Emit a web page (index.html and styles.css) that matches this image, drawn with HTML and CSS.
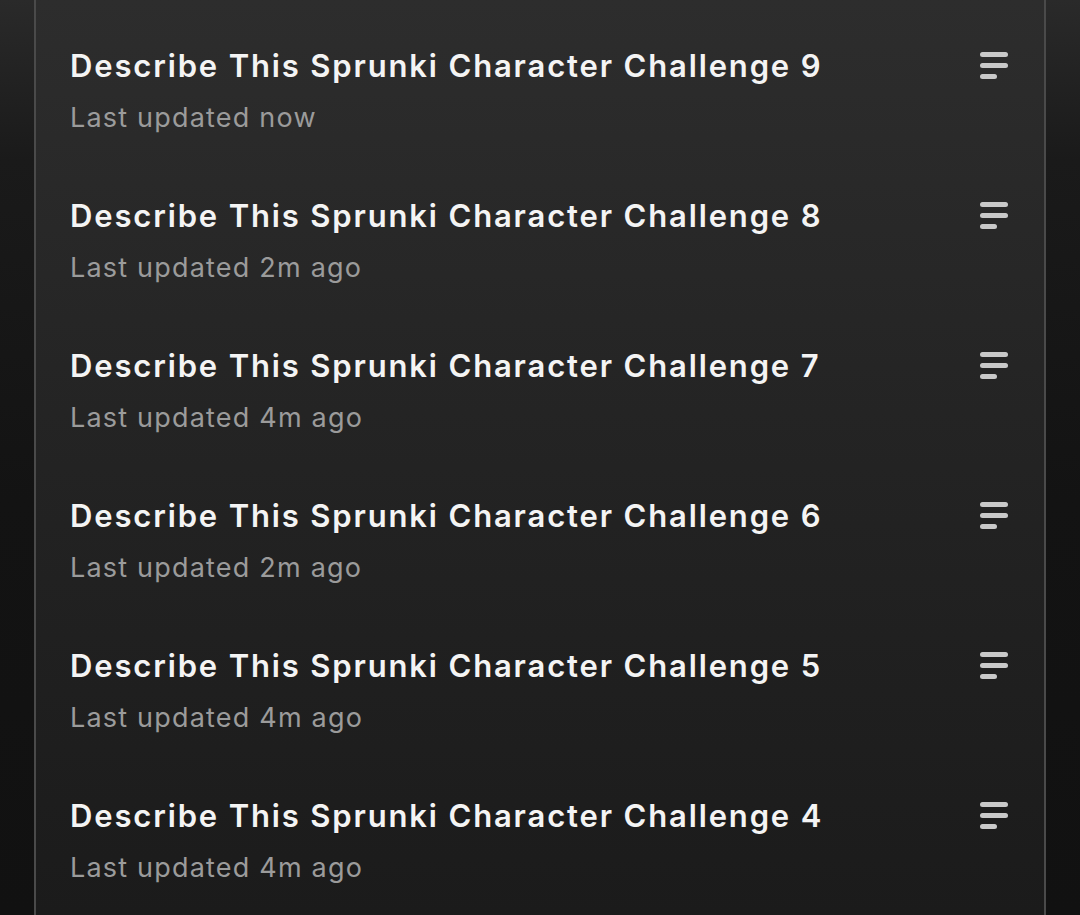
FILE: index.html
```html
<!DOCTYPE html>
<html lang="en">
<head>
<meta charset="utf-8">
<title>Challenges</title>
<link rel="stylesheet" href="styles.css">
</head>
<body>
<main class="page">
  <ul class="card">
    <li class="row">
      <div class="text">
        <div class="title">Describe This Sprunki Character Challenge 9</div>
        <div class="meta">Last updated now</div>
      </div>
      <svg class="icon" width="28" height="28" viewBox="0 0 28 28"><g stroke="#c9c9c9" stroke-width="5" stroke-linecap="round"><line x1="2.5" y1="2.5" x2="25.5" y2="2.5"/><line x1="2.5" y1="13.5" x2="25.5" y2="13.5"/><line x1="2.5" y1="24.5" x2="14.5" y2="24.5"/></g></svg>
    </li>
    <li class="row">
      <div class="text">
        <div class="title">Describe This Sprunki Character Challenge 8</div>
        <div class="meta">Last updated 2m ago</div>
      </div>
      <svg class="icon" width="28" height="28" viewBox="0 0 28 28"><g stroke="#c9c9c9" stroke-width="5" stroke-linecap="round"><line x1="2.5" y1="2.5" x2="25.5" y2="2.5"/><line x1="2.5" y1="13.5" x2="25.5" y2="13.5"/><line x1="2.5" y1="24.5" x2="14.5" y2="24.5"/></g></svg>
    </li>
    <li class="row">
      <div class="text">
        <div class="title">Describe This Sprunki Character Challenge 7</div>
        <div class="meta">Last updated 4m ago</div>
      </div>
      <svg class="icon" width="28" height="28" viewBox="0 0 28 28"><g stroke="#c9c9c9" stroke-width="5" stroke-linecap="round"><line x1="2.5" y1="2.5" x2="25.5" y2="2.5"/><line x1="2.5" y1="13.5" x2="25.5" y2="13.5"/><line x1="2.5" y1="24.5" x2="14.5" y2="24.5"/></g></svg>
    </li>
    <li class="row">
      <div class="text">
        <div class="title">Describe This Sprunki Character Challenge 6</div>
        <div class="meta">Last updated 2m ago</div>
      </div>
      <svg class="icon" width="28" height="28" viewBox="0 0 28 28"><g stroke="#c9c9c9" stroke-width="5" stroke-linecap="round"><line x1="2.5" y1="2.5" x2="25.5" y2="2.5"/><line x1="2.5" y1="13.5" x2="25.5" y2="13.5"/><line x1="2.5" y1="24.5" x2="14.5" y2="24.5"/></g></svg>
    </li>
    <li class="row">
      <div class="text">
        <div class="title">Describe This Sprunki Character Challenge 5</div>
        <div class="meta">Last updated 4m ago</div>
      </div>
      <svg class="icon" width="28" height="28" viewBox="0 0 28 28"><g stroke="#c9c9c9" stroke-width="5" stroke-linecap="round"><line x1="2.5" y1="2.5" x2="25.5" y2="2.5"/><line x1="2.5" y1="13.5" x2="25.5" y2="13.5"/><line x1="2.5" y1="24.5" x2="14.5" y2="24.5"/></g></svg>
    </li>
    <li class="row">
      <div class="text">
        <div class="title">Describe This Sprunki Character Challenge 4</div>
        <div class="meta">Last updated 4m ago</div>
      </div>
      <svg class="icon" width="28" height="28" viewBox="0 0 28 28"><g stroke="#c9c9c9" stroke-width="5" stroke-linecap="round"><line x1="2.5" y1="2.5" x2="25.5" y2="2.5"/><line x1="2.5" y1="13.5" x2="25.5" y2="13.5"/><line x1="2.5" y1="24.5" x2="14.5" y2="24.5"/></g></svg>
    </li>
  </ul>
</main>
</body>
</html>
```

FILE: styles.css
```css
html, body {
  margin: 0;
  padding: 0;
  height: 100%;
}

body {
  background: linear-gradient(180deg, #2a2a2a 0px, #1a1a1a 160px, #131313 500px, #111111 100%);
  font-family: Inter, "Noto Sans", sans-serif;
  overflow: hidden;
}

.page {
  padding-left: 34px;
  height: 915px;
  box-sizing: border-box;
}

.card {
  list-style: none;
  margin: 0;
  padding: 8px 0 0;
  width: 1012px;
  height: 915px;
  box-sizing: border-box;
  border-left: 2px solid #4a4a4a;
  border-right: 2px solid #4a4a4a;
  background: linear-gradient(180deg, #2d2d2d 0%, #242424 45%, #1b1b1b 100%);
}

.row {
  display: flex;
  justify-content: space-between;
  align-items: flex-start;
  height: 150px;
  box-sizing: border-box;
  padding: 40px 36px 0 34px;
}

.text {
  display: flex;
  flex-direction: column;
  gap: 18px;
}

.title {
  font-size: 31px;
  line-height: 36px;
  font-weight: 600;
  color: #f4f4f4;
  letter-spacing: 1.85px;
}

.meta {
  font-size: 27px;
  line-height: 32px;
  font-weight: 400;
  color: #9b9b9b;
  letter-spacing: 1.2px;
}

.icon {
  display: block;
  margin-top: 4px;
  flex: none;
}
```
